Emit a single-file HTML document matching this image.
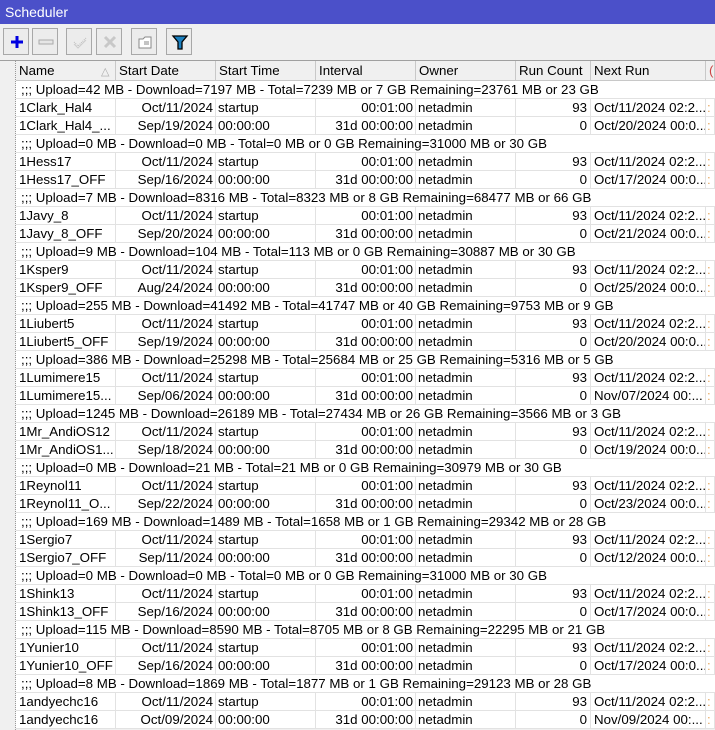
<!DOCTYPE html>
<html><head><meta charset="utf-8"><style>
*{margin:0;padding:0;box-sizing:border-box}
body{width:715px;height:729px;overflow:hidden;background:#f0f0f0;font-family:"Liberation Sans",Arial,sans-serif;font-size:13.3px;color:#000;position:relative}
.title{position:absolute;left:0;top:0;width:715px;height:24px;background:#4b50c9;color:#fff;font-size:14px;padding:4px 0 0 5px}
.btn{position:absolute;top:28px;width:26px;height:27px;border:1px solid #a8a8a8;background:#ececec}
.btn svg{position:absolute;left:0;top:0}
.grid{position:absolute;left:0;top:60px;width:715px;height:669px;background:#fff;border-top:1px solid #a0a0a0}
.hd{position:absolute;top:0;height:20px;background:#f0f0f0;border-right:1px solid #c8c8c8;border-bottom:1px solid #c8c8c8;padding:2px 0 0 3px;white-space:nowrap;overflow:hidden}
.gut{position:absolute;left:0;top:0;width:16px;height:669px;background:#f0f0f0;border-right:1px dotted #999}
.r{position:absolute;left:16px;width:699px;height:18px;border-bottom:1px solid #e2e2e2;white-space:nowrap}
.r span{position:absolute;top:1px;overflow:hidden;height:17px}
.c{left:5px;position:absolute}
.d span{border-right:1px solid #e2e2e2;height:17px;top:0;padding-top:1px}
.n{left:0;width:100px;padding-left:3px}
.sd{left:100px;width:100px;text-align:right;padding-right:2px}
.st{left:200px;width:100px;padding-left:2px}
.iv{left:300px;width:100px;text-align:right;padding-right:2px}
.ow{left:400px;width:100px;padding-left:2px}
.rc{left:500px;width:75px;text-align:right;padding-right:3px}
.nr{left:575px;width:115px;padding-left:3px}
.x{left:690px;width:9px;color:#e8a860;padding-left:1px}
</style></head><body>
<div class="title">Scheduler</div>
<div class="btn" style="left:3px"><svg width="26" height="27"><path d="M7 13h12M13 7v12" stroke="#0000e0" stroke-width="3"/></svg></div>
<div class="btn" style="left:32px"><svg width="26" height="27"><rect x="6" y="11" width="14" height="4" fill="#e6e6e6" stroke="#aaa"/></svg></div>
<div class="btn" style="left:66px"><svg width="26" height="27"><path d="M7 13l4 4 8-8" stroke="#bbb" stroke-width="1" stroke-dasharray="1 1" fill="none"/><path d="M7 15l4 4 8-8" stroke="#ccc" stroke-width="1" fill="none"/></svg></div>
<div class="btn" style="left:96px"><svg width="26" height="27"><path d="M8 8l10 10M18 8L8 18" stroke="#c8c8c8" stroke-width="3" fill="none"/></svg></div>
<div class="btn" style="left:131px"><svg width="26" height="27"><path d="M7 10h4l2-2h6v11H7z" stroke="#888" fill="#fff"/><path d="M12 13h5M12 15h5" stroke="#888"/></svg></div>
<div class="btn" style="left:166px"><svg width="26" height="27"><path d="M6 7h14l-5 6v7h-4v-7z" fill="#1a7fbf" stroke="#000" stroke-width="1.3"/></svg></div>
<div class="grid">
<div class="gut"></div>
<div class="hd" style="left:16px;width:100px">Name<span style="position:absolute;left:85px;color:#aaa;font-size:11px;top:4px">&#9651;</span></div>
<div class="hd" style="left:116px;width:100px">Start Date</div>
<div class="hd" style="left:216px;width:100px">Start Time</div>
<div class="hd" style="left:316px;width:100px">Interval</div>
<div class="hd" style="left:416px;width:100px">Owner</div>
<div class="hd" style="left:516px;width:75px">Run Count</div>
<div class="hd" style="left:591px;width:115px">Next Run</div>
<div class="hd" style="left:706px;width:9px;color:#c44">(</div>

<div class="r" style="top:20px"><span class="c">;;; Upload=42 MB - Download=7197 MB - Total=7239 MB or 7 GB Remaining=23761 MB or 23 GB</span></div>
<div class="r d" style="top:38px"><span class="n">1Clark_Hal4</span><span class="sd">Oct/11/2024</span><span class="st">startup</span><span class="iv">00:01:00</span><span class="ow">netadmin</span><span class="rc">93</span><span class="nr">Oct/11/2024 02:2...</span><span class="x">:</span></div>
<div class="r d" style="top:56px"><span class="n">1Clark_Hal4_...</span><span class="sd">Sep/19/2024</span><span class="st">00:00:00</span><span class="iv">31d 00:00:00</span><span class="ow">netadmin</span><span class="rc">0</span><span class="nr">Oct/20/2024 00:0...</span><span class="x">:</span></div>

<div class="r" style="top:74px"><span class="c">;;; Upload=0 MB - Download=0 MB - Total=0 MB or 0 GB Remaining=31000 MB or 30 GB</span></div>
<div class="r d" style="top:92px"><span class="n">1Hess17</span><span class="sd">Oct/11/2024</span><span class="st">startup</span><span class="iv">00:01:00</span><span class="ow">netadmin</span><span class="rc">93</span><span class="nr">Oct/11/2024 02:2...</span><span class="x">:</span></div>
<div class="r d" style="top:110px"><span class="n">1Hess17_OFF</span><span class="sd">Sep/16/2024</span><span class="st">00:00:00</span><span class="iv">31d 00:00:00</span><span class="ow">netadmin</span><span class="rc">0</span><span class="nr">Oct/17/2024 00:0...</span><span class="x">:</span></div>

<div class="r" style="top:128px"><span class="c">;;; Upload=7 MB - Download=8316 MB - Total=8323 MB or 8 GB Remaining=68477 MB or 66 GB</span></div>
<div class="r d" style="top:146px"><span class="n">1Javy_8</span><span class="sd">Oct/11/2024</span><span class="st">startup</span><span class="iv">00:01:00</span><span class="ow">netadmin</span><span class="rc">93</span><span class="nr">Oct/11/2024 02:2...</span><span class="x">:</span></div>
<div class="r d" style="top:164px"><span class="n">1Javy_8_OFF</span><span class="sd">Sep/20/2024</span><span class="st">00:00:00</span><span class="iv">31d 00:00:00</span><span class="ow">netadmin</span><span class="rc">0</span><span class="nr">Oct/21/2024 00:0...</span><span class="x">:</span></div>

<div class="r" style="top:182px"><span class="c">;;; Upload=9 MB - Download=104 MB - Total=113 MB or 0 GB Remaining=30887 MB or 30 GB</span></div>
<div class="r d" style="top:200px"><span class="n">1Ksper9</span><span class="sd">Oct/11/2024</span><span class="st">startup</span><span class="iv">00:01:00</span><span class="ow">netadmin</span><span class="rc">93</span><span class="nr">Oct/11/2024 02:2...</span><span class="x">:</span></div>
<div class="r d" style="top:218px"><span class="n">1Ksper9_OFF</span><span class="sd">Aug/24/2024</span><span class="st">00:00:00</span><span class="iv">31d 00:00:00</span><span class="ow">netadmin</span><span class="rc">0</span><span class="nr">Oct/25/2024 00:0...</span><span class="x">:</span></div>

<div class="r" style="top:236px"><span class="c">;;; Upload=255 MB - Download=41492 MB - Total=41747 MB or 40 GB Remaining=9753 MB or 9 GB</span></div>
<div class="r d" style="top:254px"><span class="n">1Liubert5</span><span class="sd">Oct/11/2024</span><span class="st">startup</span><span class="iv">00:01:00</span><span class="ow">netadmin</span><span class="rc">93</span><span class="nr">Oct/11/2024 02:2...</span><span class="x">:</span></div>
<div class="r d" style="top:272px"><span class="n">1Liubert5_OFF</span><span class="sd">Sep/19/2024</span><span class="st">00:00:00</span><span class="iv">31d 00:00:00</span><span class="ow">netadmin</span><span class="rc">0</span><span class="nr">Oct/20/2024 00:0...</span><span class="x">:</span></div>

<div class="r" style="top:290px"><span class="c">;;; Upload=386 MB - Download=25298 MB - Total=25684 MB or 25 GB Remaining=5316 MB or 5 GB</span></div>
<div class="r d" style="top:308px"><span class="n">1Lumimere15</span><span class="sd">Oct/11/2024</span><span class="st">startup</span><span class="iv">00:01:00</span><span class="ow">netadmin</span><span class="rc">93</span><span class="nr">Oct/11/2024 02:2...</span><span class="x">:</span></div>
<div class="r d" style="top:326px"><span class="n">1Lumimere15...</span><span class="sd">Sep/06/2024</span><span class="st">00:00:00</span><span class="iv">31d 00:00:00</span><span class="ow">netadmin</span><span class="rc">0</span><span class="nr">Nov/07/2024 00:...</span><span class="x">:</span></div>

<div class="r" style="top:344px"><span class="c">;;; Upload=1245 MB - Download=26189 MB - Total=27434 MB or 26 GB Remaining=3566 MB or 3 GB</span></div>
<div class="r d" style="top:362px"><span class="n">1Mr_AndiOS12</span><span class="sd">Oct/11/2024</span><span class="st">startup</span><span class="iv">00:01:00</span><span class="ow">netadmin</span><span class="rc">93</span><span class="nr">Oct/11/2024 02:2...</span><span class="x">:</span></div>
<div class="r d" style="top:380px"><span class="n">1Mr_AndiOS1...</span><span class="sd">Sep/18/2024</span><span class="st">00:00:00</span><span class="iv">31d 00:00:00</span><span class="ow">netadmin</span><span class="rc">0</span><span class="nr">Oct/19/2024 00:0...</span><span class="x">:</span></div>

<div class="r" style="top:398px"><span class="c">;;; Upload=0 MB - Download=21 MB - Total=21 MB or 0 GB Remaining=30979 MB or 30 GB</span></div>
<div class="r d" style="top:416px"><span class="n">1Reynol11</span><span class="sd">Oct/11/2024</span><span class="st">startup</span><span class="iv">00:01:00</span><span class="ow">netadmin</span><span class="rc">93</span><span class="nr">Oct/11/2024 02:2...</span><span class="x">:</span></div>
<div class="r d" style="top:434px"><span class="n">1Reynol11_O...</span><span class="sd">Sep/22/2024</span><span class="st">00:00:00</span><span class="iv">31d 00:00:00</span><span class="ow">netadmin</span><span class="rc">0</span><span class="nr">Oct/23/2024 00:0...</span><span class="x">:</span></div>

<div class="r" style="top:452px"><span class="c">;;; Upload=169 MB - Download=1489 MB - Total=1658 MB or 1 GB Remaining=29342 MB or 28 GB</span></div>
<div class="r d" style="top:470px"><span class="n">1Sergio7</span><span class="sd">Oct/11/2024</span><span class="st">startup</span><span class="iv">00:01:00</span><span class="ow">netadmin</span><span class="rc">93</span><span class="nr">Oct/11/2024 02:2...</span><span class="x">:</span></div>
<div class="r d" style="top:488px"><span class="n">1Sergio7_OFF</span><span class="sd">Sep/11/2024</span><span class="st">00:00:00</span><span class="iv">31d 00:00:00</span><span class="ow">netadmin</span><span class="rc">0</span><span class="nr">Oct/12/2024 00:0...</span><span class="x">:</span></div>

<div class="r" style="top:506px"><span class="c">;;; Upload=0 MB - Download=0 MB - Total=0 MB or 0 GB Remaining=31000 MB or 30 GB</span></div>
<div class="r d" style="top:524px"><span class="n">1Shink13</span><span class="sd">Oct/11/2024</span><span class="st">startup</span><span class="iv">00:01:00</span><span class="ow">netadmin</span><span class="rc">93</span><span class="nr">Oct/11/2024 02:2...</span><span class="x">:</span></div>
<div class="r d" style="top:542px"><span class="n">1Shink13_OFF</span><span class="sd">Sep/16/2024</span><span class="st">00:00:00</span><span class="iv">31d 00:00:00</span><span class="ow">netadmin</span><span class="rc">0</span><span class="nr">Oct/17/2024 00:0...</span><span class="x">:</span></div>

<div class="r" style="top:560px"><span class="c">;;; Upload=115 MB - Download=8590 MB - Total=8705 MB or 8 GB Remaining=22295 MB or 21 GB</span></div>
<div class="r d" style="top:578px"><span class="n">1Yunier10</span><span class="sd">Oct/11/2024</span><span class="st">startup</span><span class="iv">00:01:00</span><span class="ow">netadmin</span><span class="rc">93</span><span class="nr">Oct/11/2024 02:2...</span><span class="x">:</span></div>
<div class="r d" style="top:596px"><span class="n">1Yunier10_OFF</span><span class="sd">Sep/16/2024</span><span class="st">00:00:00</span><span class="iv">31d 00:00:00</span><span class="ow">netadmin</span><span class="rc">0</span><span class="nr">Oct/17/2024 00:0...</span><span class="x">:</span></div>

<div class="r" style="top:614px"><span class="c">;;; Upload=8 MB - Download=1869 MB - Total=1877 MB or 1 GB Remaining=29123 MB or 28 GB</span></div>
<div class="r d" style="top:632px"><span class="n">1andyechc16</span><span class="sd">Oct/11/2024</span><span class="st">startup</span><span class="iv">00:01:00</span><span class="ow">netadmin</span><span class="rc">93</span><span class="nr">Oct/11/2024 02:2...</span><span class="x">:</span></div>
<div class="r d" style="top:650px"><span class="n">1andyechc16</span><span class="sd">Oct/09/2024</span><span class="st">00:00:00</span><span class="iv">31d 00:00:00</span><span class="ow">netadmin</span><span class="rc">0</span><span class="nr">Nov/09/2024 00:...</span><span class="x">:</span></div>
</div>
</body></html>
